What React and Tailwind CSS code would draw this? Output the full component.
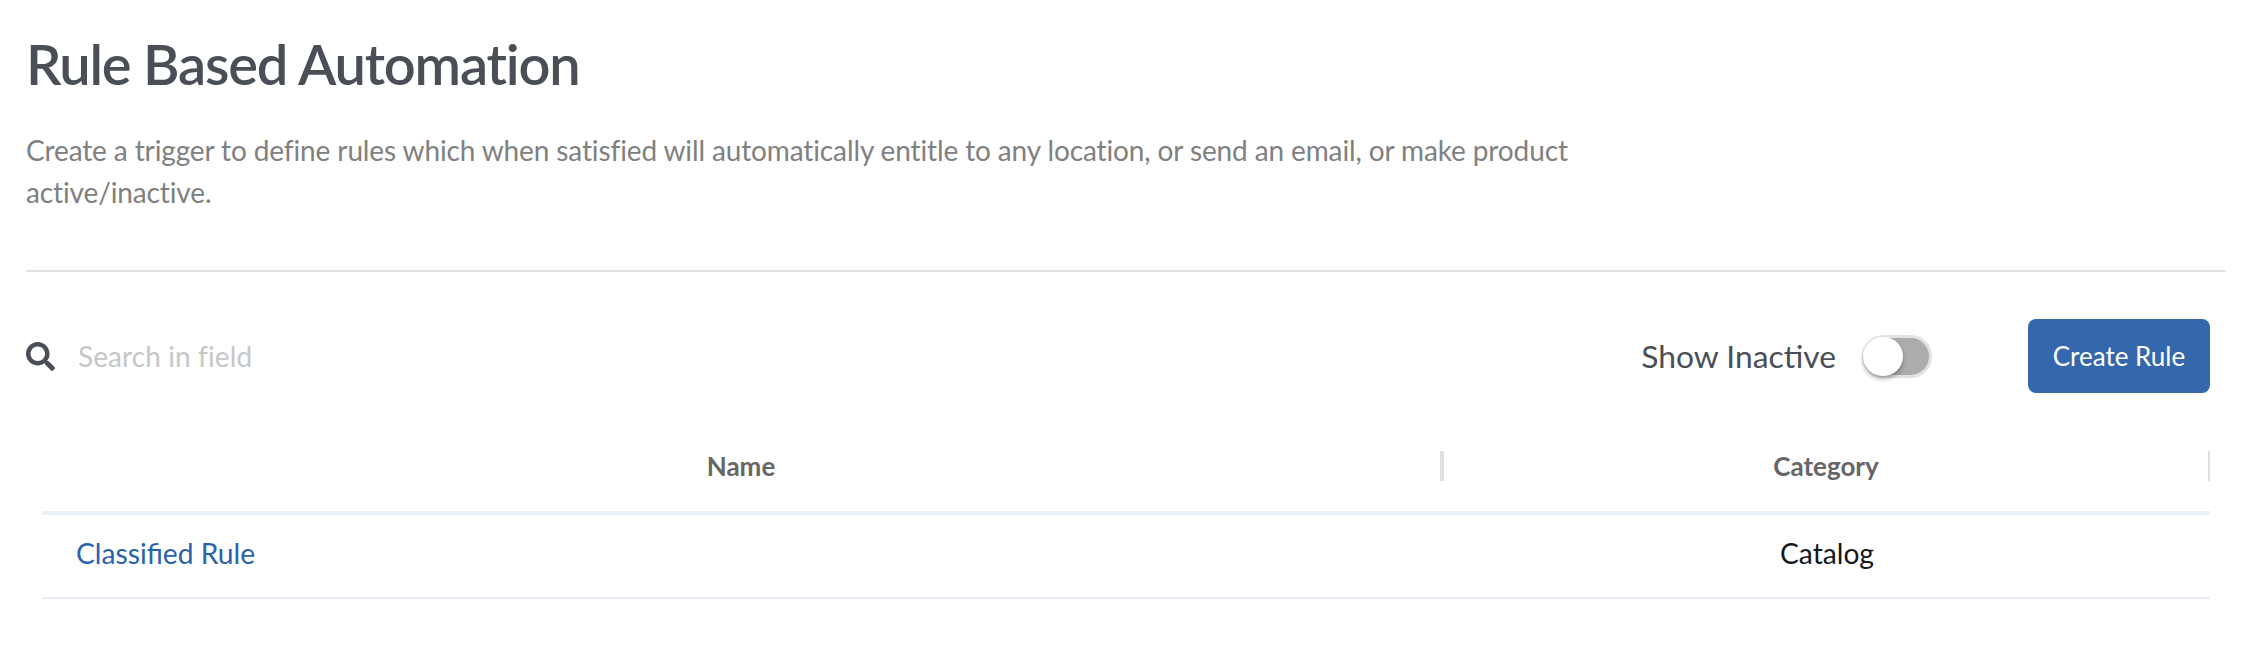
import React from "react";
import { FaSearch } from "react-icons/fa";

function App() {
  return (
    <div className="min-h-[666px] bg-white font-['Lato',sans-serif]">
      <div className="pl-[26px] pr-[30px] pt-[29px]">
        <h1 className="text-[56px] leading-[70px] font-semibold tracking-[-1.2px] text-[#4a4f57]">
          Rule Based Automation
        </h1>
        <p className="mt-[30px] w-[1600px] text-[28px] leading-[42px] tracking-[-0.12px] text-[#808080]">
          Create a trigger to define rules which when satisfied will automatically entitle to any location, or send an email, or make product active/inactive.
        </p>
        <div className="mt-[57px] h-[2px] bg-[#e3e3e3]" />

        <div className="mt-[47px] flex h-[74px] items-center justify-between pr-[16px]">
          <div className="flex items-center gap-[23px]">
            <FaSearch className="h-[29px] w-[29px] text-[#4a4f57]" />
            <input
              type="text"
              placeholder="Search in field"
              className="w-[400px] text-[28px] tracking-[0.1px] text-[#4a4f57] outline-none placeholder:text-[#c6c6c6]"
            />
          </div>
          <div className="flex items-center">
            <span className="pt-[2px] text-[31.8px] text-[#4a4f57]">Show Inactive</span>
            <div className="relative ml-[26px] h-[43px] w-[70px] rounded-full border-[3px] border-[#e2e2e2] bg-[#acacac]">
              <div className="absolute left-[-2px] top-[-1px] h-[39px] w-[40px] rounded-full bg-white shadow-[0_3px_4px_rgba(0,0,0,0.3)]" />
            </div>
            <button className="ml-[96px] h-[74px] w-[182px] rounded-[8px] bg-[#3567ac] text-[26px] text-white">
              Create Rule
            </button>
          </div>
        </div>

        <div className="ml-[16px] mr-[16px] mt-[58px]">
          <div className="flex h-[30px] items-center text-[26px] font-bold text-[#666666]">
            <div className="flex h-full w-[1402px] items-center justify-center border-r-4 border-[#dfe0e4]">
              Name
            </div>
            <div className="flex h-full flex-1 items-center justify-center border-r-2 border-[#dfe0e4]">
              Category
            </div>
          </div>
          <div className="mt-[30px] h-[4px] bg-[#e9eff6]" />
          <div className="flex h-[84px] items-center border-b-2 border-[#e9eff6] pb-[5px] text-[28.2px]">
            <a className="w-[1402px] pl-[34px] text-[#2a62ab]">Classified Rule</a>
            <div className="flex-1 text-center text-[#15181c]">Catalog</div>
          </div>
        </div>
      </div>
    </div>
  );
}

export default App;
